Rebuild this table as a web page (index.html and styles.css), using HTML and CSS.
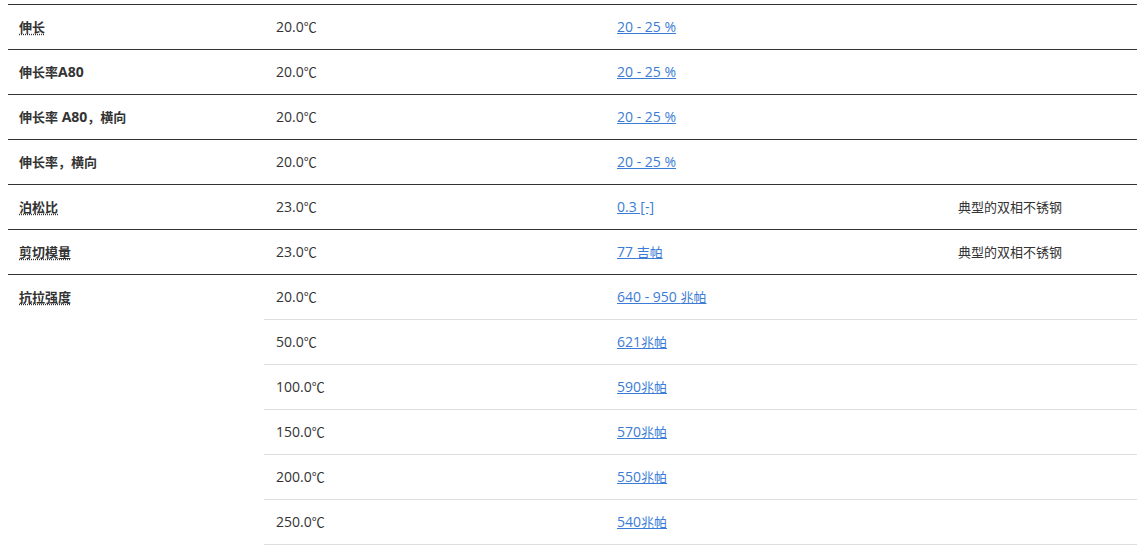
FILE: index.html
```html
<!DOCTYPE html>
<html lang="zh-CN">
<head>
<meta charset="utf-8">
<title>材料性能</title>
<link rel="stylesheet" href="styles.css">
</head>
<body>
<div class="wrap">
<table class="props">
  <colgroup>
    <col class="c1"><col class="c2"><col class="c3"><col class="c4">
  </colgroup>
  <tbody>
    <tr class="main">
      <th><abbr title="伸长"><span class="zh">伸长</span></abbr></th>
      <td>20.0<span class="zh">℃</span></td>
      <td><a href="#">20 - 25 %</a></td>
      <td></td>
    </tr>
    <tr class="main">
      <th><span class="zh">伸长率</span>A80</th>
      <td>20.0<span class="zh">℃</span></td>
      <td><a href="#">20 - 25 %</a></td>
      <td></td>
    </tr>
    <tr class="main">
      <th><span class="zh">伸长率</span> A80<span class="zh punct">，</span><span class="zh">横向</span></th>
      <td>20.0<span class="zh">℃</span></td>
      <td><a href="#">20 - 25 %</a></td>
      <td></td>
    </tr>
    <tr class="main">
      <th><span class="zh">伸长率</span><span class="zh punct">，</span><span class="zh">横向</span></th>
      <td>20.0<span class="zh">℃</span></td>
      <td><a href="#">20 - 25 %</a></td>
      <td></td>
    </tr>
    <tr class="main">
      <th><abbr title="泊松比"><span class="zh">泊松比</span></abbr></th>
      <td>23.0<span class="zh">℃</span></td>
      <td><a href="#">0.3 [-]</a></td>
      <td><span class="zh">典型的双相不锈钢</span></td>
    </tr>
    <tr class="main">
      <th><abbr title="剪切模量"><span class="zh">剪切模量</span></abbr></th>
      <td>23.0<span class="zh">℃</span></td>
      <td><a href="#">77 <span class="zh">吉帕</span></a></td>
      <td><span class="zh">典型的双相不锈钢</span></td>
    </tr>
    <tr class="main">
      <th rowspan="6"><abbr title="抗拉强度"><span class="zh">抗拉强度</span></abbr></th>
      <td>20.0<span class="zh">℃</span></td>
      <td><a href="#">640 - 950 <span class="zh">兆帕</span></a></td>
      <td></td>
    </tr>
    <tr class="sub">
      <td>50.0<span class="zh">℃</span></td>
      <td><a href="#">621<span class="zh">兆帕</span></a></td>
      <td></td>
    </tr>
    <tr class="sub">
      <td>100.0<span class="zh">℃</span></td>
      <td><a href="#">590<span class="zh">兆帕</span></a></td>
      <td></td>
    </tr>
    <tr class="sub">
      <td>150.0<span class="zh">℃</span></td>
      <td><a href="#">570<span class="zh">兆帕</span></a></td>
      <td></td>
    </tr>
    <tr class="sub">
      <td>200.0<span class="zh">℃</span></td>
      <td><a href="#">550<span class="zh">兆帕</span></a></td>
      <td></td>
    </tr>
    <tr class="sub last">
      <td>250.0<span class="zh">℃</span></td>
      <td><a href="#">540<span class="zh">兆帕</span></a></td>
      <td></td>
    </tr>
  </tbody>
</table>
</div>
</body>
</html>
```

FILE: styles.css
```css
html, body {
  margin: 0;
  padding: 0;
  background: #ffffff;
}

body {
  font-family: "Open Sans", "Noto Sans CJK SC", sans-serif;
  font-size: 14px;
  color: #333333;
}

.wrap {
  padding: 4px 0 0 8px;
}

.props {
  width: 1129px;
  border-collapse: collapse;
  table-layout: fixed;
}

.c1 { width: 256px; }
.c2 { width: 341px; }
.c3 { width: 341px; }
.c4 { width: 191px; }

.props th,
.props td {
  padding: 12px;
  height: 20px;
  line-height: 20px;
  text-align: left;
  vertical-align: top;
  white-space: nowrap;
}

.props th {
  font-weight: 700;
  padding-left: 11px;
  color: #333333;
}

.props tr.main > th,
.props tr.main > td {
  border-top: 1px solid #333333;
}

.props tr.sub > td {
  border-top: 1px solid #dddddd;
}

.props tr.last > td {
  border-bottom: 1px solid #dddddd;
}

.zh {
  font-family: "Noto Sans CJK SC", sans-serif;
  font-size: 13px;
}

.punct {
  font-family: "Noto Sans CJK TC", sans-serif;
}

.props abbr {
  text-decoration: underline dotted;
  text-underline-offset: 2px;
  cursor: help;
}

.props a {
  color: #3b7cd6;
  text-decoration: underline;
}
```
